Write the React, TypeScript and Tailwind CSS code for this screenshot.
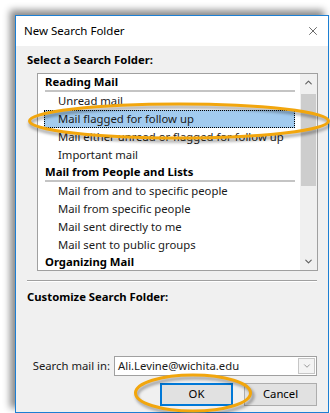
import { X, ChevronUp, ChevronDown } from "lucide-react";

const font = { fontFamily: '"Segoe UI", "Noto Sans", sans-serif' };

type Row = { label: string; kind: "head" | "item"; selected?: boolean };

const rows: Row[] = [
  { label: "Reading Mail", kind: "head" },
  { label: "Unread mail", kind: "item" },
  { label: "Mail flagged for follow up", kind: "item", selected: true },
  { label: "Mail either unread or flagged for follow up", kind: "item" },
  { label: "Important mail", kind: "item" },
  { label: "Mail from People and Lists", kind: "head" },
  { label: "Mail from and to specific people", kind: "item" },
  { label: "Mail from specific people", kind: "item" },
  { label: "Mail sent directly to me", kind: "item" },
  { label: "Mail sent to public groups", kind: "item" },
  { label: "Organizing Mail", kind: "head" },
];

function ListRow({ row }: { row: Row }) {
  if (row.kind === "head") {
    return (
      <div className="h-[18px] pl-[7px] pr-[5px] flex flex-col shrink-0">
        <div className="h-[16px] flex items-center font-bold text-black whitespace-nowrap">{row.label}</div>
        <div className="h-[2px] bg-[#c4c4c4]" />
      </div>
    );
  }
  return (
    <div className="h-[18px] pl-[6px] pr-[5px] flex shrink-0">
      <div
        className={
          "flex-1 flex items-center whitespace-nowrap overflow-hidden " +
          (row.selected ? "bg-[#a2cbef] border border-dotted border-black pl-[13px]" : "pl-[14px]")
        }
      >
        {row.label}
      </div>
    </div>
  );
}

export default function App() {
  return (
    <div className="w-[330px] h-[413px] bg-white relative overflow-hidden pl-[15px] pt-[15px] text-[11.3px] text-[#1a1a1a]" style={font}>
      {/* Dialog window */}
      <div className="w-[314px] h-[398px] border border-[#1c7fd3] flex flex-col shadow-[-5px_-5px_7px_rgba(0,0,0,0.45)]">
        {/* Title bar */}
        <div className="h-[30px] bg-white flex items-center justify-between pl-[8px] pr-[8px] shrink-0">
          <span className="text-[11.5px] text-black">New Search Folder</span>
          <X size={14} strokeWidth={1} className="text-black" />
        </div>

        {/* Body */}
        <div className="flex-1 bg-[#f0f0f0] flex flex-col pl-[11px] pr-[11px]">
          <div className="mt-[7px] h-[15px] flex items-center font-bold text-black">Select a Search Folder:</div>

          {/* List box */}
          <div className="mt-[5px] ml-[10px] w-[281px] h-[198px] border border-[#a0a0a0] bg-white flex overflow-hidden">
            <div className="flex-1 flex flex-col overflow-hidden">
              {rows.map((r) => (
                <ListRow key={r.label} row={r} />
              ))}
            </div>
            <div className="w-[17px] bg-[#f0f0f0] flex flex-col items-center">
              <div className="h-[17px] flex items-center justify-center text-[#606060]">
                <ChevronUp size={11} strokeWidth={2.5} />
              </div>
              <div className="mt-[3px] w-[15px] h-[92px] bg-[#cdcdcd]" />
              <div className="flex-1" />
              <div className="h-[17px] flex items-center justify-center text-[#606060]">
                <ChevronDown size={11} strokeWidth={2.5} />
              </div>
            </div>
          </div>

          <div className="mt-[9px] h-px bg-[#a0a0a0] border-b border-white box-content" />

          <div className="mt-[8px] h-[15px] flex items-center font-bold text-black">Customize Search Folder:</div>

          {/* Search mail in */}
          <div className="mt-[51px] flex items-center justify-end">
            <span className="mr-[4px]">Search mail in:</span>
            <div className="w-[203px] h-[20px] border border-[#a0a0a0] bg-white flex items-center pl-[3px] pr-[1px]">
              <span className="flex-1">Ali.Levine@wichita.edu</span>
              <div className="w-[17px] h-[16px] border border-[#c6c6c6] bg-[#f4f4f4] flex items-center justify-center text-[#606060]">
                <ChevronDown size={10} strokeWidth={1.5} />
              </div>
            </div>
          </div>

          {/* Buttons */}
          <div className="mt-[7px] flex justify-end gap-[11px]">
            <div className="w-[73px] h-[23px] border-2 border-[#0078d7] bg-[#e1e1e1] flex items-center justify-center text-black">OK</div>
            <div className="w-[73px] h-[23px] border border-[#adadad] bg-[#e1e1e1] flex items-center justify-center text-black">Cancel</div>
          </div>
        </div>
      </div>

      {/* Annotation ellipses */}
      <svg className="absolute left-0 top-0 pointer-events-none" width="330" height="413">
        <defs>
          <filter id="sh" x="-20%" y="-50%" width="140%" height="200%">
            <feGaussianBlur stdDeviation="1.5" />
          </filter>
        </defs>
        <ellipse cx="180" cy="124" rx="150" ry="17" fill="none" stroke="rgba(0,0,0,0.35)" strokeWidth="3" filter="url(#sh)" />
        <ellipse cx="179" cy="121" rx="149.5" ry="17" fill="none" stroke="#f2a60d" strokeWidth="3" />
        <ellipse cx="195" cy="396" rx="58" ry="18" fill="none" stroke="rgba(0,0,0,0.35)" strokeWidth="3" filter="url(#sh)" />
        <ellipse cx="193" cy="393" rx="57.5" ry="18" fill="none" stroke="#f2a60d" strokeWidth="3" />
      </svg>
    </div>
  );
}
